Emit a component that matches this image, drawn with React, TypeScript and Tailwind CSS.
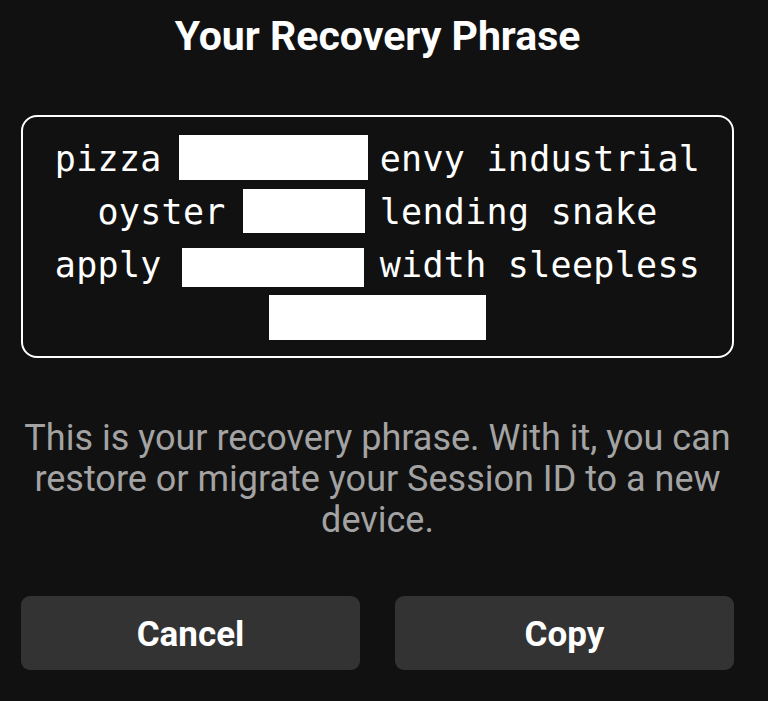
import React from 'react';

const RecoveryPhrase: React.FC = () => {
  return (
    <div className="min-h-screen overflow-hidden bg-[#111111] pl-[21px] pr-[34px] font-['Roboto','Noto_Sans',sans-serif] text-white">
      {/* Заголовок */}
      <h1 className="pt-[11px] text-center text-[41px] font-bold leading-[50px]">
        Your Recovery Phrase
      </h1>

      {/* Фраза */}
      <div className="mt-[54px] rounded-[16px] border-2 border-white pb-[11px] pt-[16px] font-['DejaVu_Sans_Mono',monospace] text-[35px] tracking-[0.3px] whitespace-pre">
        <div className="flex h-[53px] items-center justify-center">
          <span>pizza</span>
          <span className="mb-[5px] ml-[17px] mr-[12px] inline-block h-[45px] w-[189px] bg-white" />
          <span>envy industrial</span>
        </div>
        <div className="flex h-[53px] items-center justify-center">
          <span>oyster</span>
          <span className="mb-[4px] ml-[17px] mr-[15px] inline-block h-[44px] w-[122px] bg-white" />
          <span>lending snake</span>
        </div>
        <div className="flex h-[53px] items-center justify-center">
          <span>apply</span>
          <span className="mt-[4px] ml-[20px] mr-[16px] inline-block h-[39px] w-[182px] bg-white" />
          <span>width sleepless</span>
        </div>
        <div className="flex h-[53px] items-center justify-center">
          <span className="mb-[3px] inline-block h-[45px] w-[217px] bg-white" />
        </div>
      </div>

      {/* Описание */}
      <p className="mt-[60px] text-center text-[36px] leading-[41px] text-[#a3a3a3]">
        This is your recovery phrase. With it, you can restore or migrate your Session ID to a new device.
      </p>

      {/* Кнопки */}
      <div className="mt-[55px] flex gap-[35px]">
        <button className="flex h-[74px] flex-1 items-center justify-center rounded-[9px] bg-[#333333] pt-1 text-[35px] font-bold">
          Cancel
        </button>
        <button className="flex h-[74px] flex-1 items-center justify-center rounded-[9px] bg-[#333333] pt-1 text-[35px] font-bold">
          Copy
        </button>
      </div>
    </div>
  );
};

export default RecoveryPhrase;
